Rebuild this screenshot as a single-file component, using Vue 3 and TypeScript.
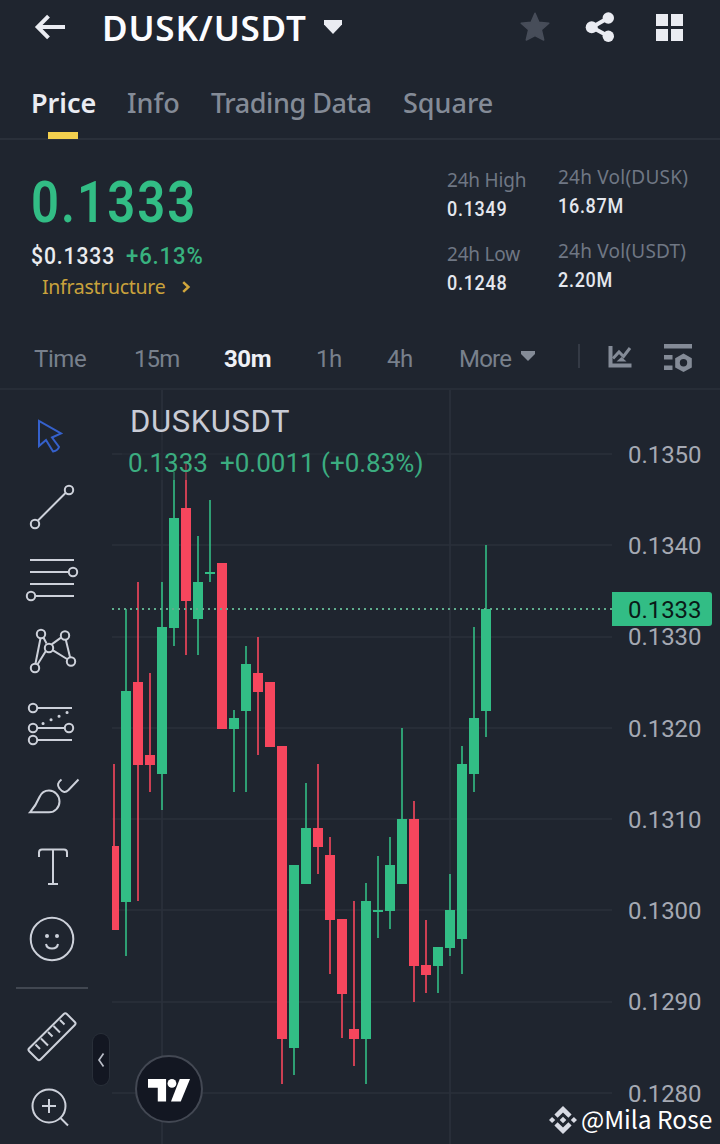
<script setup lang="ts">
interface Candle {
  open: number
  high: number
  low: number
  close: number
}

interface Stat {
  label: string
  value: string
}

const tabs = [
  { name: 'Price', cls: 'tab-price' },
  { name: 'Info', cls: 'tab-info' },
  { name: 'Trading Data', cls: 'tab-data' },
  { name: 'Square', cls: 'tab-square' },
]

const statColumns: Stat[][] = [
  [
    { label: '24h High', value: '0.1349' },
    { label: '24h Low', value: '0.1248' },
  ],
  [
    { label: '24h Vol(DUSK)', value: '16.87M' },
    { label: '24h Vol(USDT)', value: '2.20M' },
  ],
]

// Prices are in ticks of 0.0001: open, high, low, close.
const ticks: number[][] = [
  [1307, 1316, 1298, 1298],
  [1301, 1333, 1295, 1324],
  [1325, 1336, 1301, 1316],
  [1317, 1326, 1313, 1316],
  [1315, 1336, 1311, 1331],
  [1331, 1348, 1329, 1343],
  [1344, 1349, 1328, 1334],
  [1332, 1341, 1328, 1336],
  [1337, 1345, 1336, 1337],
  [1338, 1338, 1320, 1320],
  [1320, 1322, 1313, 1321],
  [1322, 1329, 1313, 1327],
  [1326, 1330, 1317, 1324],
  [1325, 1325, 1318, 1318],
  [1318, 1318, 1281, 1286],
  [1285, 1305, 1282, 1305],
  [1303, 1314, 1303, 1309],
  [1309, 1316, 1304, 1307],
  [1306, 1308, 1293, 1299],
  [1299, 1299, 1286, 1291],
  [1287, 1301, 1283, 1286],
  [1286, 1303, 1281, 1301],
  [1300, 1306, 1297, 1300],
  [1300, 1308, 1298, 1305],
  [1303, 1320, 1303, 1310],
  [1310, 1312, 1290, 1294],
  [1294, 1299, 1291, 1293],
  [1294, 1296, 1291, 1296],
  [1296, 1304, 1295, 1300],
  [1297, 1318, 1293, 1316],
  [1315, 1331, 1313, 1321],
  [1322, 1340, 1319, 1333],
]

const candles: Candle[] = ticks.map(([open, high, low, close]) => ({ open, high, low, close }))

const levels = [1350, 1340, 1330, 1320, 1310, 1300, 1290, 1280]

const yOf = (tick: number): number => 64 + (1350 - tick) * 9.129

const bars = candles.map((c, i) => {
  const top = Math.round(yOf(Math.max(c.open, c.close)) - 0.3)
  const bottom = Math.round(yOf(Math.min(c.open, c.close)) + 0.9)
  return {
    x: 2 + i * 12,
    top,
    height: Math.max(2, bottom - top),
    high: Math.round(yOf(c.high)),
    low: Math.round(yOf(c.low)),
    cls: c.close >= c.open ? 'up' : 'down',
  }
})

const price = (tick: number): string => (tick / 10000).toFixed(4)
</script>

<template>
  <main class="screen">
    <header class="topbar">
      <svg class="back" viewBox="0 0 32 28">
        <path d="M31 14H4M14.500 3.200L3.700 14l10.800 10.800" />
      </svg>
      <h1 class="pair">DUSK/USDT</h1>
      <svg class="pair-caret" viewBox="0 0 18 14"><path d="M0 0h18v4.500L9 14 0 4.500z" /></svg>
      <div class="actions">
        <svg class="star" viewBox="0 0 30 30">
          <path d="M15 1.200l3.900 9 9.900 1-7.400 6.600 2.300 10.200-8.700-4.300L6.300 28l2.300-10.200L1.200 11.200l9.900-1z" />
        </svg>
        <svg class="share" viewBox="0 0 30 30">
          <path d="M23 6L7 15.300l16 8.700" />
          <circle cx="23.300" cy="6" r="5.700" /><circle cx="6.700" cy="15.200" r="6" /><circle cx="23.300" cy="24.300" r="5.700" />
        </svg>
        <svg class="grid-icon" viewBox="0 0 27 27">
          <path d="M0 0h12v12H0zM15 0h12v12H15zM0 15h12v12H0zM15 15h12v12H15z" />
        </svg>
      </div>
    </header>

    <nav class="tabs">
      <span v-for="(tab, i) in tabs" :key="tab.name" class="tab" :class="[tab.cls, { active: i === 0 }]">{{ tab.name }}</span>
    </nav>

    <section class="summary">
      <div class="quote">
        <div class="last">0.1333</div>
        <div class="sub"><span class="fiat">$0.1333</span><span class="change">+6.13%</span></div>
        <div class="sector">
          <span>Infrastructure</span>
          <svg viewBox="0 0 8 12"><path d="M1.200 1.200L6.400 6l-5.200 4.800" /></svg>
        </div>
      </div>
      <div v-for="(col, i) in statColumns" :key="i" class="stats" :class="'stats-' + i">
        <dl v-for="s in col" :key="s.label" class="stat">
          <dt>{{ s.label }}</dt>
          <dd>{{ s.value }}</dd>
        </dl>
      </div>
    </section>

    <nav class="intervals">
      <span class="iv time">Time</span>
      <span class="iv m15">15m</span>
      <span class="iv m30">30m</span>
      <span class="iv h1">1h</span>
      <span class="iv h4">4h</span>
      <span class="iv more">More</span>
      <svg class="more-caret" viewBox="0 0 14 10"><path d="M0 0h14v3L7 10 0 3z" /></svg>
      <i class="sep"></i>
      <svg class="ind" viewBox="0 0 24 24">
        <path class="line" d="M2.500 1v19.500H23.500" />
        <path class="thin" d="M5 13.500l6-6.500 4.500 4.500 6.500-8.500" />
        <path d="M8.500 16.500l5-4.500 5 4.500z" />
      </svg>
      <svg class="cfg" viewBox="0 0 28 28">
        <path d="M0 0h28v4.500H0zM0 11h8.500v4.500H0zM0 21.500h8.500V26H0z" />
        <path fill-rule="evenodd" d="M19.500 9.500l8.300 4.700v9.200l-8.300 4.600-8.300-4.600v-9.200zM19.500 15a3.700 3.700 0 100 7.400 3.700 3.700 0 000-7.400z" />
      </svg>
    </nav>

    <section class="workspace">
      <aside class="tools">
        <svg class="tool cursor" viewBox="0 0 72 72">
          <path d="M23 21v25l7-6 7 11.500q5-1 6-4.500l-7-9.500 9-4z" />
        </svg>
        <svg class="tool" viewBox="0 0 72 72">
          <path d="M22 48.500L50 20.500" /><circle cx="19" cy="52" r="4.200" /><circle cx="53" cy="18" r="4.200" />
        </svg>
        <svg class="tool" viewBox="0 0 72 72">
          <path d="M14 16h44M14 28h38M14 40h44M19 52h39" /><circle cx="57" cy="28" r="4.200" /><circle cx="15" cy="52" r="4.200" />
        </svg>
        <svg class="tool" viewBox="0 0 72 72">
          <path d="M24.500 22.200L19.500 47.500M27.400 21.500l3.200 6M45 21.600l-9.300 6.800M49.800 23.800l4.300 17.700M37 34.300L51 43M30 34.800L21.500 48.500" />
          <circle cx="25" cy="18" r="4.200" /><circle cx="49" cy="19.500" r="4.200" /><circle cx="33" cy="32" r="4.200" /><circle cx="55" cy="45.500" r="4.200" /><circle cx="19" cy="52" r="4.200" />
        </svg>
        <svg class="tool" viewBox="0 0 72 72">
          <path d="M21 20h35M21 40h28M21 52h35" />
          <circle cx="17" cy="20" r="4.200" /><circle cx="17" cy="40" r="4.200" /><circle cx="53" cy="40" r="4.200" /><circle cx="17" cy="52" r="4.200" />
          <path class="dots" d="M27 35.500h.1M35 31.800h.1M43 28.200h.1M51 24.500h.1" />
        </svg>
        <svg class="tool" viewBox="0 0 72 72">
          <path d="M14 52.300h19c6 0 10.500-5 10.500-10.800S39 30.500 33 30.500c-5 0-7.500 2-9.500 6.500-2.500 6-4.500 9.500-9.500 15.300zM45.500 19.500c-4 3-4.500 6-2 9 3.500 4.500 6 4.500 9 1.500l10-10.500" />
        </svg>
        <svg class="tool" viewBox="0 0 72 72">
          <path d="M23 25v-4.500q0-3 3-3h22q3 0 3 3V25M37 17.500V52M32 52h10" />
        </svg>
        <svg class="tool" viewBox="0 0 72 72">
          <circle cx="36" cy="35" r="21.300" /><path d="M30 40c1 6 11 6 12 0" />
          <circle class="dot" cx="31" cy="32" r="2" /><circle class="dot" cx="41" cy="32" r="2" />
        </svg>
        <i class="rule"></i>
        <svg class="tool" viewBox="0 0 72 72">
          <path d="M13.200 47.200L47.800 13q1.500-1.500 3 0l8 8q1.500 1.500 0 3L24.500 58.500q-1.500 1.500-3 0l-8.300-8.300q-1.500-1.500 0-3zM19.500 43.500l4.500 4.500M25 37.500l7 7M32 31l4.500 4.500M37.500 25l6.500 6.500M44 19l4.500 4.500" />
        </svg>
        <svg class="tool" viewBox="0 0 72 72">
          <circle cx="33" cy="33" r="16.500" /><path d="M26 33h14M33 26v14M44.500 45l7.500 7.500" />
        </svg>
      </aside>

      <div class="chart">
        <svg class="plot" viewBox="0 0 608 754">
          <defs>
            <clipPath id="pane"><rect x="0" y="0" width="500" height="754" /></clipPath>
          </defs>
          <g class="gridlines">
            <path v-for="l in levels" :key="l" :d="`M0 ${Math.round(yOf(l))}H500`" />
            <path d="M50 0V754M338 0V754" />
          </g>
          <g clip-path="url(#pane)">
            <g v-for="(b, i) in bars" :key="i" :class="b.cls">
              <rect class="wick" :x="b.x - 1" :y="b.high" width="2" :height="b.low - b.high" />
              <rect :x="b.x - 5" :y="b.top" width="10" :height="b.height" />
            </g>
          </g>
          <path class="last-line" d="M0 219H500" />
          <rect class="veil" x="10" y="50" width="305" height="40" />
          <text v-for="l in levels" :key="l" class="axis" x="516" :y="yOf(l) + 8.700" textLength="73.500">{{ price(l) }}</text>
          <path class="tag" d="M500 202h97q3 0 3 3v28q0 3-3 3h-97z" />
          <text class="axis tag-text" x="516" y="228" textLength="73.500">0.1333</text>
        </svg>

        <div class="legend">
          <div class="symbol">DUSKUSDT</div>
          <div class="values"><span class="v1">0.1333</span><span class="v2">+0.0011</span><span class="v3">(+0.83%)</span></div>
        </div>

        <div class="collapse"><svg viewBox="0 0 8 16"><path d="M6.500 1.500L2 8l4.500 6.500" /></svg></div>

        <div class="tv">
          <svg viewBox="0 0 44 24">
            <path d="M0 0h18.500v23H10V9H0z" /><circle cx="24.500" cy="4.500" r="4.500" /><path d="M32.500 0H43l-9.500 23H23.500z" />
          </svg>
        </div>
      </div>

      <div class="credit">
        <svg viewBox="0 0 28 28">
          <path d="M14 0l8.600 8.600-3.200 3.200L14 6.400l-5.400 5.400-3.200-3.200zM14 28l-8.600-8.600 3.200-3.200 5.400 5.400 5.400-5.400 3.200 3.200zM3.100 10.900L6.200 14l-3.100 3.100L0 14zM24.900 10.900L28 14l-3.100 3.100-3.100-3.100zM14 10.700l3.300 3.300-3.300 3.300-3.300-3.300z" />
        </svg>
        <span>@Mila Rose</span>
      </div>
    </section>
  </main>
</template>

<style>
body {
  background: #1f252f;
}
</style>

<style scoped>
* {
  box-sizing: border-box;
}
.screen {
  width: 720px;
  height: 1144px;
  overflow: hidden;
  background: #1f252f;
  color: #eaecef;
  font-family: "Noto Sans", "Open Sans", sans-serif;
}
svg {
  display: block;
  flex: none;
  overflow: visible;
}
span {
  white-space: nowrap;
}
.topbar {
  display: flex;
  align-items: center;
  height: 56px;
  padding: 0 37px 0 34px;
}
.back {
  width: 32px;
  height: 28px;
  margin-top: -3px;
  fill: none;
  stroke: #eaecf2;
  stroke-width: 4;
}
.pair {
  width: 206px;
  margin: 0 0 0 36px;
  font-size: 35px;
  line-height: 56px;
  font-weight: 600;
  letter-spacing: 0.8px;
  color: #fbfcff;
}
.pair-caret {
  width: 18px;
  height: 14px;
  margin: -2px 0 0 16px;
  fill: #eaecf2;
}
.actions {
  display: flex;
  align-items: center;
  margin-left: auto;
  margin-top: -2px;
}
.star {
  width: 30px;
  height: 30px;
  fill: #474d59;
  stroke: #474d59;
  stroke-width: 1.5;
  stroke-linejoin: round;
}
.share {
  width: 30px;
  height: 30px;
  margin-left: 35px;
  fill: #eaecf2;
}
.share path {
  fill: none;
  stroke: #eaecf2;
  stroke-width: 4;
}
.grid-icon {
  width: 27px;
  height: 27px;
  margin-left: 41px;
  fill: #eaecf2;
}
.tabs {
  display: flex;
  height: 84px;
  padding-left: 31px;
  border-bottom: 2px solid #2a303a;
}
.tab {
  position: relative;
  height: 84px;
  line-height: 94px;
  font-size: 27px;
  font-weight: 500;
  color: #848b97;
}
.tab.active {
  font-weight: 600;
  color: #eaecf2;
}
.tab.active::after {
  content: "";
  position: absolute;
  left: 17px;
  bottom: 1px;
  width: 30px;
  height: 7px;
  background: #f3d04e;
}
.tab-price {
  width: 96px;
}
.tab-info {
  width: 84px;
}
.tab-data {
  width: 192px;
  letter-spacing: -0.45px;
}
.summary {
  display: flex;
  height: 188px;
}
.quote {
  width: 447px;
  padding: 32px 0 0 31px;
}
.last {
  width: 200px;
  height: 60px;
  line-height: 62px;
  font-family: Roboto, sans-serif;
  font-size: 57px;
  font-weight: 600;
  letter-spacing: 2.4px;
  transform: scaleX(0.86);
  transform-origin: left center;
  color: #32bd85;
}
.sub {
  display: flex;
  height: 48px;
  line-height: 48px;
  font-family: Roboto, sans-serif;
  font-size: 24px;
  font-weight: 500;
}
.fiat {
  width: 95px;
  letter-spacing: 1px;
  transform: scaleX(0.88);
  transform-origin: left center;
}
.change {
  letter-spacing: 0.95px;
  transform: scaleX(0.92);
  transform-origin: left center;
  color: #38b27f;
}
.sector {
  display: flex;
  align-items: center;
  height: 16px;
  margin-top: -1px;
  padding-left: 11px;
  font-size: 19.500px;
  line-height: 16px;
  letter-spacing: -0.3px;
  color: #c9a23c;
}
.sector span {
  width: 140px;
}
.sector svg {
  width: 8px;
  height: 12px;
  fill: none;
  stroke: #d0a63c;
  stroke-width: 2.500;
}
.stats {
  width: 111px;
  padding-top: 25px;
}
.stats-1 {
  width: 160px;
  padding-top: 22px;
}
.stat {
  height: 74px;
  margin: 0;
}
.stat dt {
  height: 30px;
  line-height: 30px;
  font-size: 19px;
  letter-spacing: -0.2px;
  color: #6f7784;
  white-space: nowrap;
}
.stats-1 dt {
  letter-spacing: 0.22px;
}
.stat dd {
  height: 28px;
  margin: 0;
  line-height: 29px;
  font-family: Roboto, sans-serif;
  font-size: 20px;
  font-weight: 500;
  letter-spacing: 0.8px;
  transform: scaleX(0.9);
  transform-origin: left center;
  color: #e4e7ee;
}
.intervals {
  display: flex;
  align-items: center;
  height: 62px;
  padding-left: 34px;
  border-bottom: 2px solid #272d37;
  font-family: Roboto, sans-serif;
  font-size: 24px;
  color: #78808c;
}
.iv {
  line-height: 28px;
  padding-top: 2px;
  letter-spacing: -0.4px;
}
.time {
  width: 100px;
}
.m15 {
  width: 90px;
  letter-spacing: -0.9px;
}
.m30 {
  width: 92px;
  font-weight: 700;
  color: #eff1f6;
}
.h1 {
  width: 71px;
}
.h4 {
  width: 72px;
}
.more {
  width: 62px;
  letter-spacing: -0.8px;
}
.more-caret {
  width: 14px;
  height: 10px;
  margin-top: -4px;
  fill: #848b97;
}
.sep {
  width: 2px;
  height: 24px;
  margin: -4px 0 0 43px;
  background: #343a45;
}
.ind {
  width: 24px;
  height: 24px;
  margin: -3px 0 0 28px;
  fill: #848b97;
}
.ind .line {
  fill: none;
  stroke: #848b97;
  stroke-width: 4;
}
.ind .thin {
  fill: none;
  stroke: #848b97;
  stroke-width: 3;
}
.cfg {
  width: 28px;
  height: 28px;
  margin-left: 32px;
  fill: #848b97;
}
.workspace {
  position: relative;
  display: flex;
  height: 754px;
}
.tools {
  width: 112px;
  padding: 10px 16px 0;
}
.tool {
  width: 72px;
  height: 72px;
  fill: none;
  stroke: #cdd1da;
  stroke-width: 2;
}
.tool .dots {
  stroke-width: 3;
  stroke-linecap: round;
}
.tool .dot {
  fill: #cdd1da;
  stroke: none;
}
.cursor {
  stroke: #3561cc;
}
.rule {
  display: block;
  width: 72px;
  height: 2px;
  margin: 11px 0 12px;
  background: #414751;
}
.chart {
  position: relative;
  width: 608px;
  height: 754px;
}
.plot {
  width: 608px;
  height: 754px;
}
.gridlines {
  fill: none;
  stroke: #2b313b;
  stroke-width: 1.700;
}
.up {
  fill: #32bd85;
}
.down {
  fill: #f6465d;
}
.wick {
  opacity: 0.8;
}
.last-line {
  stroke: #5fae8d;
  stroke-width: 2;
  stroke-dasharray: 2 4;
}
.veil {
  fill: #1f252f;
  opacity: 0.5;
}
.axis {
  font-family: Roboto, sans-serif;
  font-size: 24px;
  fill: #a5a9b3;
}
.tag {
  fill: #32bd85;
}
.tag-text {
  fill: #0a1a18;
}
.legend {
  position: absolute;
  left: 16px;
  top: 10px;
  font-family: Roboto, sans-serif;
}
.symbol {
  padding-left: 2px;
  height: 42px;
  line-height: 44px;
  font-size: 31px;
  letter-spacing: 0.6px;
  color: #c9ccd6;
}
.values {
  display: flex;
  height: 42px;
  line-height: 42px;
  font-size: 26px;
  color: #3bad80;
}
.v1 {
  width: 92px;
}
.v2 {
  width: 101px;
}
.collapse {
  position: absolute;
  left: -19px;
  top: 644px;
  width: 16px;
  height: 51px;
  border-radius: 8px;
  background: #131722;
  box-shadow: 0 0 0 1px #292f39;
}
.collapse svg {
  width: 8px;
  height: 16px;
  margin: 18px 0 0 4px;
  fill: none;
  stroke: #b9bdc7;
  stroke-width: 1.700;
}
.tv {
  position: absolute;
  left: 23px;
  top: 665px;
  display: flex;
  align-items: center;
  justify-content: center;
  width: 68px;
  height: 68px;
  border: 2px solid #434853;
  border-radius: 50%;
  background: #131722;
}
.tv svg {
  width: 43px;
  height: 23.500px;
  margin-top: 3px;
  fill: #fff;
}
.credit {
  position: absolute;
  left: 549px;
  top: 715px;
  display: flex;
  align-items: center;
  height: 30px;
  font-family: "Noto Sans CJK SC", "Noto Sans", sans-serif;
  font-size: 24.500px;
  line-height: 28px;
  color: #fff;
}
.credit span {
  height: 30px;
}
.credit svg {
  width: 28px;
  height: 28px;
  margin-right: 4px;
  fill: #d7dae3;
}
</style>
